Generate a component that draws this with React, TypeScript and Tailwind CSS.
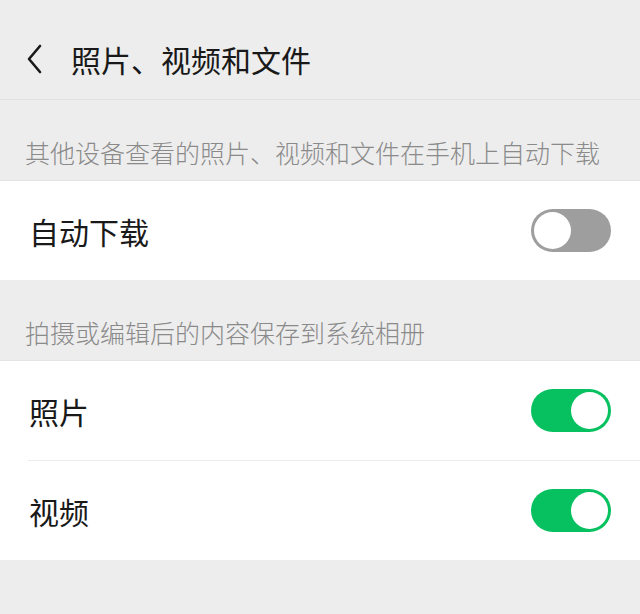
import React from 'react';

const FONT = { fontFamily: '"Noto Sans CJK SC", "Noto Sans", sans-serif' };

function Toggle({ on }: { on: boolean }) {
  if (on) {
    return (
      <div className="w-[80px] h-[43px] rounded-full bg-[#07c160] flex items-center justify-end pr-[3px]">
        <div className="w-[37px] h-[37px] rounded-full bg-white" />
      </div>
    );
  }
  return (
    <div className="w-[80px] h-[43px] rounded-full bg-[#9e9e9e] flex items-center pl-[3px]">
      <div className="w-[37px] h-[37px] rounded-full bg-white" />
    </div>
  );
}

function Row({ label, on, divider }: { label: string; on: boolean; divider?: boolean }) {
  return (
    <div className="bg-white">
      {divider && <div className="ml-[28px] h-px bg-[#ececec]" />}
      <div className="h-[99px] flex items-center justify-between pl-[29px] pr-[29px]">
        <span className="text-[30px] text-[#191919] leading-none">{label}</span>
        <Toggle on={on} />
      </div>
    </div>
  );
}

function Caption({ text }: { text: string }) {
  return (
    <div className="h-[80px] flex items-end pb-[15px] pl-[25px]">
      <span className="text-[25px] font-light text-[#8a8a8a] leading-none">{text}</span>
    </div>
  );
}

export default function App() {
  return (
    <div className="w-[640px] h-[614px] bg-[#ededed] overflow-hidden" style={FONT}>
      <div className="h-[100px] flex items-center pt-[18px] border-b border-[#e2e2e2]">
        <svg width="20" height="30" viewBox="0 0 20 30" className="ml-[24px]">
          <path d="M16 2 L5 15 L16 28" fill="none" stroke="#191919" strokeWidth="2.6" strokeLinecap="round" strokeLinejoin="round" />
        </svg>
        <span className="ml-[27px] text-[30px] text-[#191919] leading-none">照片、视频和文件</span>
      </div>
      <Caption text="其他设备查看的照片、视频和文件在手机上自动下载" />
      <div className="border-t border-[#e4e4e4]">
        <Row label="自动下载" on={false} />
      </div>
      <Caption text="拍摄或编辑后的内容保存到系统相册" />
      <div className="border-t border-[#e4e4e4]">
        <Row label="照片" on />
        <Row label="视频" on divider />
      </div>
    </div>
  );
}
